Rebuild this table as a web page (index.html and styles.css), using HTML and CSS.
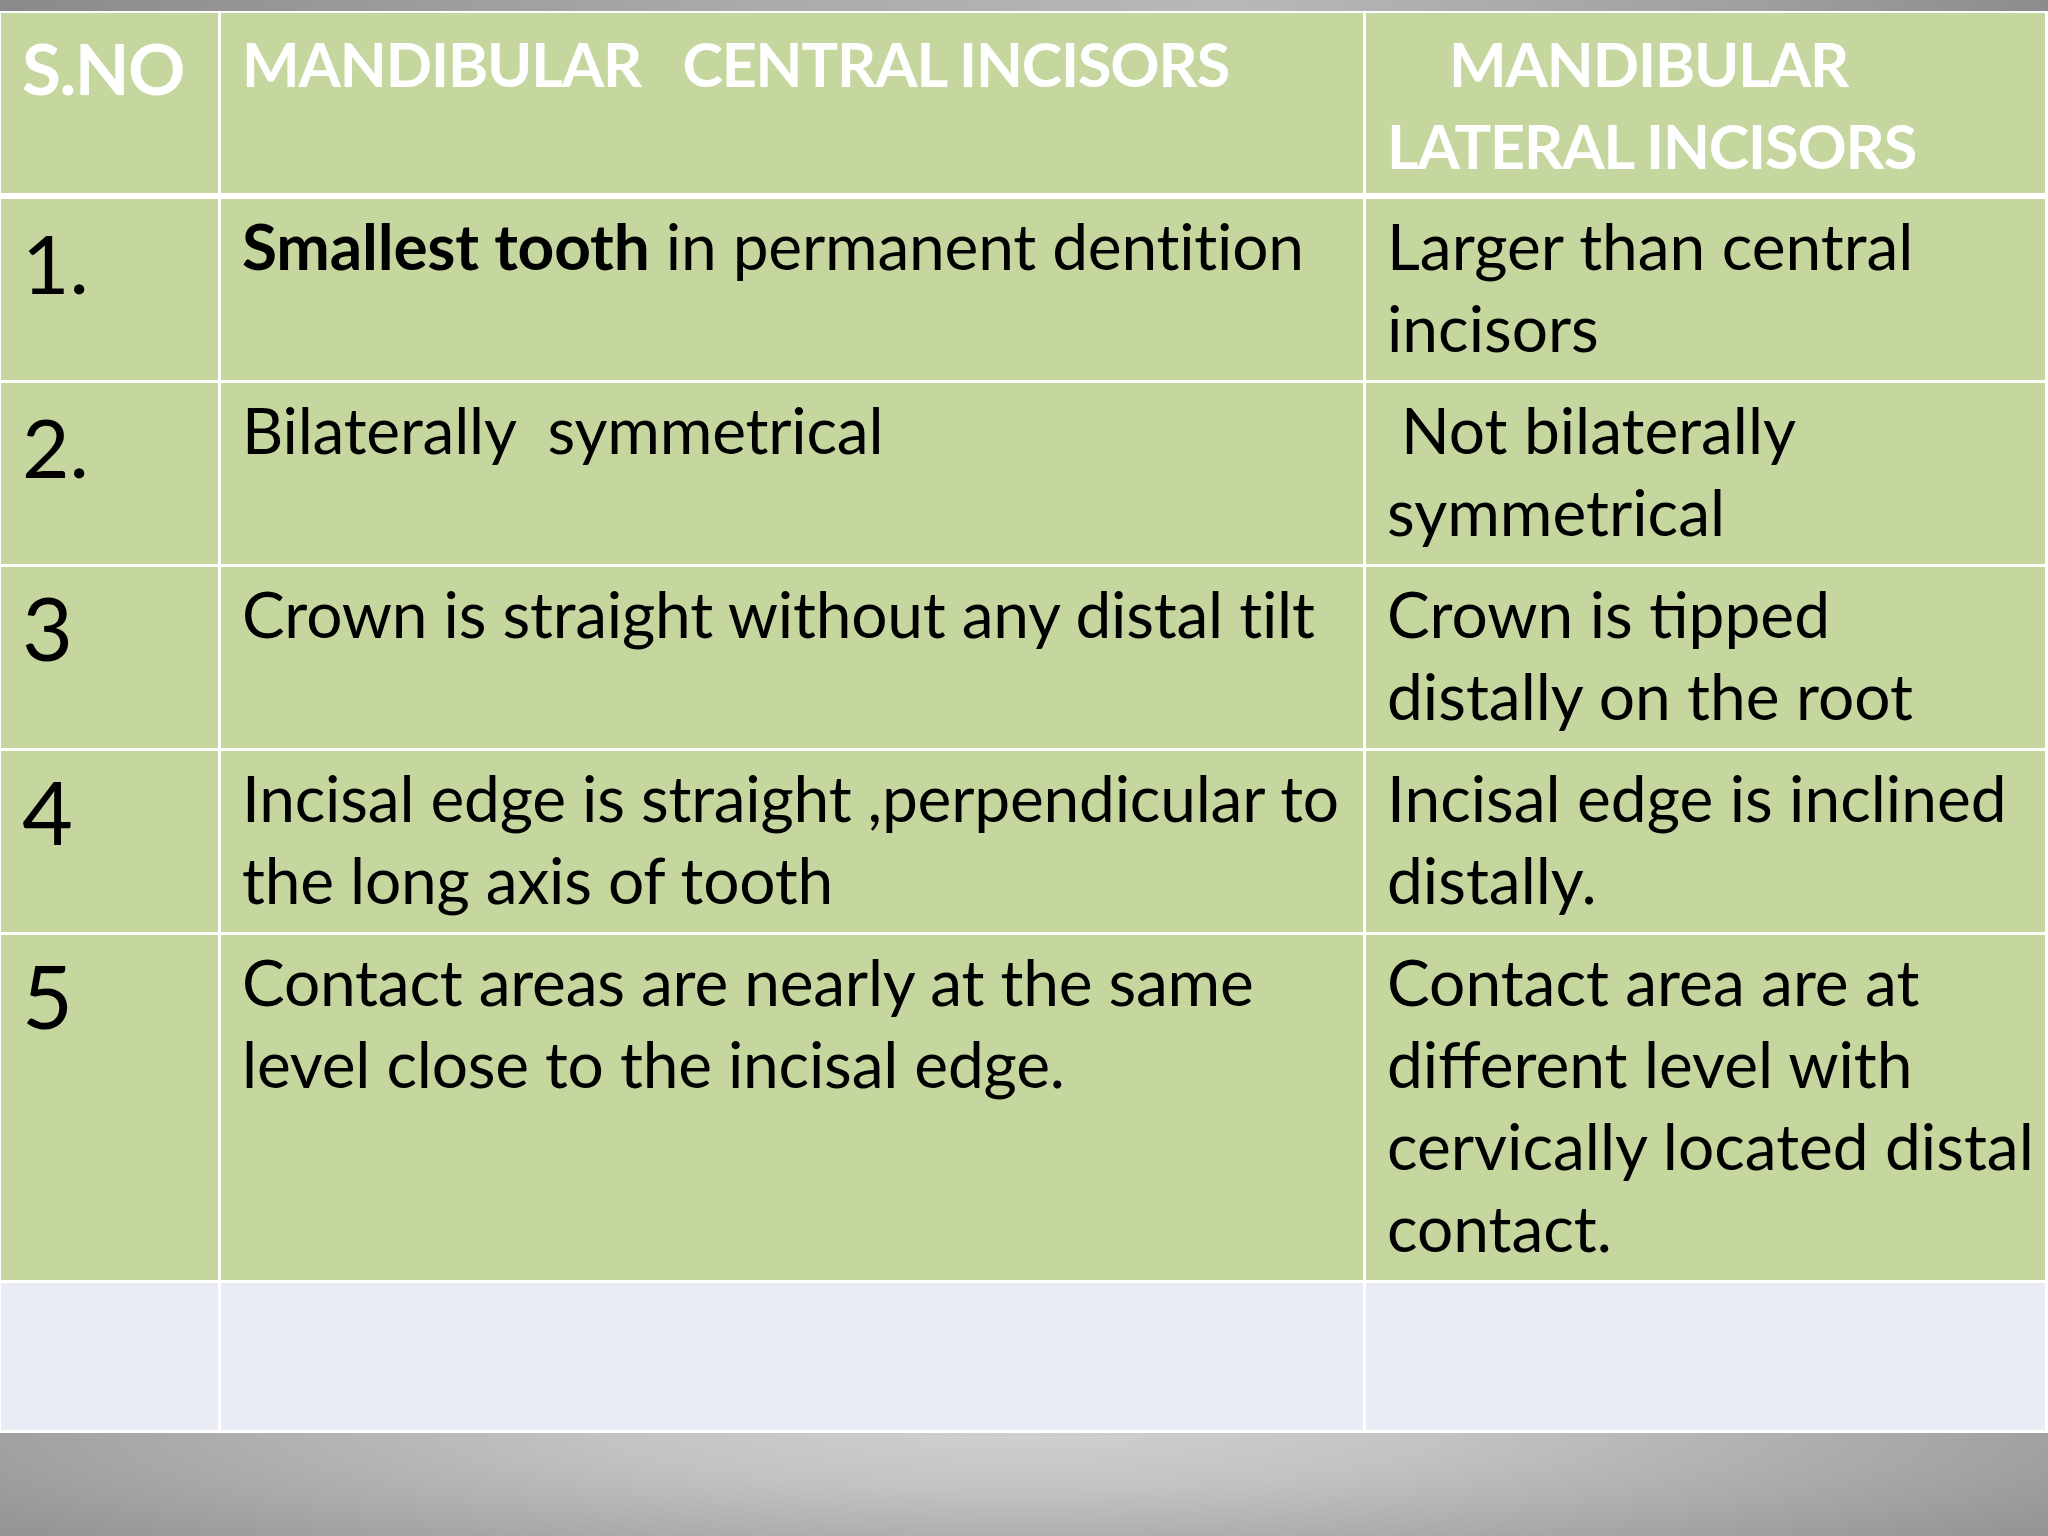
FILE: index.html
```html
<!DOCTYPE html>
<html>
<head>
<meta charset="utf-8">
<link rel="stylesheet" href="styles.css">
</head>
<body>
<div class="slide">
  <div class="topbar"></div>
  <div class="table">
    <div class="row head">
      <div class="cell c1"><span class="sno">S.NO</span></div>
      <div class="cell c2">MANDIBULAR&nbsp;&nbsp; CENTRAL INCISORS</div>
      <div class="cell c3"><span class="indent">MANDIBULAR</span><br>LATERAL INCISORS</div>
    </div>
    <div class="row">
      <div class="cell c1"><span class="num">1.</span></div>
      <div class="cell c2"><b>Smallest tooth</b> in permanent dentition</div>
      <div class="cell c3">Larger than central<br>incisors</div>
    </div>
    <div class="row">
      <div class="cell c1"><span class="num">2.</span></div>
      <div class="cell c2">Bilaterally&nbsp; symmetrical</div>
      <div class="cell c3"><span class="sp">Not bilaterally</span><br>symmetrical</div>
    </div>
    <div class="row">
      <div class="cell c1"><span class="num big">3</span></div>
      <div class="cell c2">Crown is straight without any distal tilt</div>
      <div class="cell c3">Crown is tipped<br>distally on the root</div>
    </div>
    <div class="row">
      <div class="cell c1"><span class="num big">4</span></div>
      <div class="cell c2">Incisal edge is straight ,perpendicular to<br>the long axis of tooth</div>
      <div class="cell c3">Incisal edge is inclined<br>distally.</div>
    </div>
    <div class="row tall">
      <div class="cell c1"><span class="num big">5</span></div>
      <div class="cell c2">Contact areas are nearly at the same<br>level close to the incisal edge.</div>
      <div class="cell c3">Contact area are at<br>different level with<br>cervically located distal<br>contact.</div>
    </div>
    <div class="row empty">
      <div class="cell c1"></div>
      <div class="cell c2"></div>
      <div class="cell c3"></div>
    </div>
  </div>
  <div class="bottombar"></div>
</div>
</body>
</html>
```
FILE: styles.css
```css
html, body {
  margin: 0;
  padding: 0;
  background: #ffffff;
}
.slide {
  width: 2048px;
  height: 1536px;
  display: flex;
  flex-direction: column;
  overflow: hidden;
  font-family: "Lato", "Liberation Sans", sans-serif;
}
.topbar {
  height: 11px;
  flex: none;
  background: linear-gradient(90deg, #8a8a8a 0%, #a9a9a9 35%, #b8b8b8 60%, #a0a0a0 85%, #8c8c8c 100%);
  margin-bottom: 2px;
}
.table {
  display: flex;
  flex-direction: column;
  gap: 3px;
  padding: 0 3px 3px 1px;
  flex: none;
}
.row {
  display: grid;
  grid-template-columns: 217px 1142px 679px;
  column-gap: 3px;
  height: 181px;
}
.row.head {
  height: 180px;
  margin-bottom: 3px;
}
.row.tall {
  height: 345px;
}
.row.empty {
  height: 147px;
}
.cell {
  background: #c6d69f;
  color: #000000;
  font-size: 64px;
  line-height: 82px;
  padding: 6px 0 0 21px;
  white-space: nowrap;
}
.c2 {
  letter-spacing: -0.2px;
}
.empty .cell {
  background: #e9ecf4;
}
.head .cell {
  color: #ffffff;
  font-weight: 700;
  font-size: 61px;
  letter-spacing: -1.1px;
  padding-top: 10px;
}
.head .sno {
  font-size: 71px;
  line-height: 90px;
  letter-spacing: -1.5px;
  display: block;
}
.indent {
  padding-left: 62px;
}
.sp {
  padding-left: 14px;
}
.num {
  display: block;
  font-size: 82px;
  line-height: 98px;
  padding-top: 8px;
}
.num.big {
  font-size: 88px;
  padding-top: 5px;
}
b {
  font-weight: 700;
}
.bottombar {
  flex: 1;
  background: radial-gradient(ellipse 60% 160% at 50% 0%, #d0cfd0 0%, #c2c1c4 35%, #aaa9ac 70%, #959497 100%);
}
```
